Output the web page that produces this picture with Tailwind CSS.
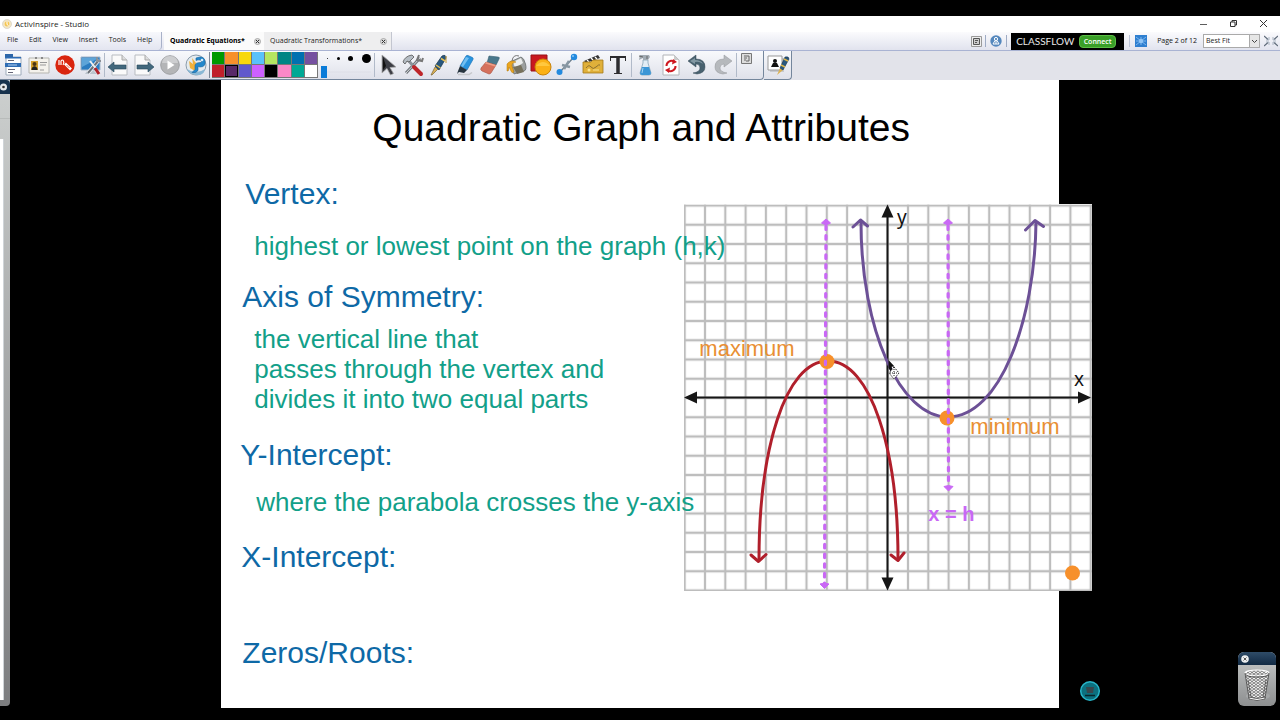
<!DOCTYPE html>
<html lang="en">
<head>
    <meta charset="UTF-8">
    <meta name="viewport" content="width=device-width, initial-scale=1.0">
    <title>ActivInspire - Studio</title>
    <script src="https://cdn.jsdelivr.net/npm/@tailwindcss/browser@4"></script>
</head>
<body class="bg-black h-screen flex flex-col overflow-hidden pt-4 font-['Open_Sans','Noto_Sans',sans-serif] text-[#222]">

    <!-- Title bar -->
    <header class="flex items-center h-4 bg-white pl-[2px] pr-[13px] shrink-0">
        <svg class="size-[10px]" viewBox="0 0 10 10"><circle cx="5" cy="5" r="4.5" fill="#f3e6c4" stroke="#d8d3c8" stroke-width=".8"/><circle cx="5" cy="5" r="2.4" fill="#f6c550"/><path d="M5 2.5v3l1.5 1" stroke="#fff" fill="none"/></svg>
        <h1 class="text-[8px] leading-none ml-[3px]">ActivInspire - Studio</h1>
        <div class="ml-auto flex gap-[23px] pb-[2px] text-[#333]">
            <button type="button" aria-label="Minimize"><svg class="size-[7px]" viewBox="0 0 7 7"><path d="M0 4.500h7" stroke="currentColor" stroke-width=".8"/></svg></button>
            <button type="button" aria-label="Restore"><svg class="size-[7px]" viewBox="0 0 7 7" fill="none" stroke="currentColor"><path d="M.5 2h4.500v4.500H.5zM2 2V.5h4.500V5H5"/></svg></button>
            <button type="button" aria-label="Close"><svg class="size-[7px]" viewBox="0 0 7 7"><path d="M0 0l7 7M7 0L0 7" stroke="currentColor"/></svg></button>
        </div>
    </header>

    <!-- Menu, document tabs, page controls -->
    <div class="flex items-stretch h-[19px] shrink-0 bg-linear-to-b from-[#fbfbfd] to-[#e1e3ee] border-b border-[#a9b3d3]">
        <nav class="flex items-center gap-[11px] w-[162px] pl-[7px] pb-px text-[7px] border-r border-[#a8b1c8] rounded-br bg-linear-to-b from-[#f7f8fc] to-[#e3e5f0]">
            <a href="#">File</a>
            <a href="#">Edit</a>
            <a href="#">View</a>
            <a href="#">Insert</a>
            <a href="#">Tools</a>
            <a href="#">Help</a>
        </nav>
        <div class="flex ml-[2px] text-[7px]">
            <div class="flex items-center justify-between w-[100px] pl-[6px] pr-[3px] bg-[#fbfbfb]">
                <a href="#" class="font-['Noto_Sans',sans-serif] font-bold text-black">Quadratic Equations*</a>
                <button type="button" aria-label="Close Quadratic Equations"><svg class="size-[7px]" viewBox="0 0 7 7"><circle cx="3.500" cy="3.500" r="3" fill="#ddd" stroke="#999" stroke-width=".8"/><path d="M2 2l3 3M5 2L2 5" stroke="#333"/></svg></button>
            </div>
            <div class="flex items-center justify-between w-[128px] pl-[6px] pr-1 bg-[#eeeeef] border-r border-[#c3c6d0]">
                <a href="#">Quadratic Transformations*</a>
                <button type="button" aria-label="Close Quadratic Transformations"><svg class="size-[7px]" viewBox="0 0 7 7"><circle cx="3.500" cy="3.500" r="3" fill="#ddd" stroke="#999" stroke-width=".8"/><path d="M2 2l3 3M5 2L2 5" stroke="#333"/></svg></button>
            </div>
        </div>
        <div class="flex items-center ml-auto pr-[2px] text-[7px]">
            <button type="button" aria-label="Page notes"><svg class="size-[11px]" viewBox="0 0 11 11"><path d="M.5.5h10v10H.5z" fill="#eee" stroke="#999"/><path d="M2.500 2.500h6v6h-6z" fill="#ccc" stroke="#555"/><path d="M4 4.500h3M4 6.500h2" stroke="#555"/></svg></button>
            <span class="w-px h-3 ml-[3px] mr-[4px] bg-[#9eabc4]"></span>
            <button type="button" aria-label="Profile"><svg class="size-3" viewBox="0 0 12 12"><circle cx="6" cy="6" r="5.700" fill="#5487bd"/><circle cx="6" cy="4" r="1.600" fill="none" stroke="#fff"/><path d="M5 5.500L3 9h6L7 5.500M6 6v3" fill="none" stroke="#fff"/></svg></button>
            <span class="w-px h-3 mx-[4px] bg-[#9eabc4]"></span>
            <div class="flex items-center justify-between w-[113px] h-[17px] pl-[5px] pr-2 bg-black">
                <span class="text-[10px] text-[#e8e8e8] font-['Lato',sans-serif]">CLASSFLOW</span>
                <button type="button" class="h-[13px] w-[37px] rounded bg-[#3a9f28] border border-[#5bbd45] leading-none font-semibold text-white">Connect</button>
            </div>
            <span class="w-px h-3 mx-[5px] bg-[#bcc4d8]"></span>
            <button type="button" aria-label="Page browser"><svg class="size-3" viewBox="0 0 12 12"><path d="M0 0h12v12H0z" fill="#2f7fd0"/><path d="M1 2l10 8M11 2L1 10M6 2v8M1 6h10" stroke="#8fc4f5" stroke-width=".8"/><circle cx="6" cy="6" r="2.200" fill="#8fc4f5"/></svg></button>
            <span class="ml-[10px] text-[#111]">Page 2 of 12</span>
            <label class="relative flex ml-[6px]">
                <span class="sr-only">Zoom</span>
                <select class="appearance-none w-[57px] h-[14px] pl-[2px] bg-white border border-[#aaa] leading-[12px] text-[7px]">
                    <option>Best Fit</option>
                </select>
                <svg class="absolute right-0 top-0 w-[11px] h-[14px] pointer-events-none" viewBox="0 0 11 14"><path d="M.5.500h10v13H.5z" fill="#e6e6e6" stroke="#aaa"/><path d="M3 6l2.500 2.500L8 6" fill="none" stroke="#444"/></svg>
            </label>
            <button type="button" class="ml-1" aria-label="Full screen"><svg class="w-[14px] h-3" viewBox="0 0 14 12" fill="none" stroke="#5f6b7a" stroke-width="1.200"><path d="M0 1l4 3.500M14 1l-4 3.500M0 11l4-3.500M14 11l-4-3.500"/><path d="M5 2v3H2M9 2v3h3M5 10V7H2M9 10V7h3" stroke="#9aa6b5" stroke-width=".8"/></svg></button>
        </div>
    </div>

    <!-- Toolbar -->
    <div class="flex h-[29px] shrink-0 bg-[#e2e3ea]">
        <div class="flex items-center bg-linear-to-b from-[#f8f9fc] to-[#dfe1ea] border-b border-r border-[#74869c] rounded-br">
            <div class="grid grid-cols-4 justify-items-center w-[104px]">
                <button type="button" aria-label="Main menu"><svg class="size-6" viewBox="0 0 24 24"><path d="M5 4h15v18H5z" fill="#fff" stroke="#9eabbb"/><path d="M4 1h8v3H4z" fill="#2e66a8"/><path d="M4 4h16v1.500H4zM4 10h16v4H4z" fill="#2e6cb4"/><path d="M7 7.500h6M7 16.500h7M7 19.500h5" stroke="#667" stroke-width="1.200"/><path d="M7 12h9" stroke="#b8d4f2"/></svg></button>
                <button type="button" aria-label="Profiles"><svg class="size-6" viewBox="0 0 24 24"><path d="M2 5h20v15H2z" fill="#f4f2ec" stroke="#b5b5b0"/><path d="M8 4h2v2H8zM14 4h2v2h-2z" fill="#888"/><path d="M4 8h7v9H4z" fill="#d5a02c"/><circle cx="7.500" cy="11" r="2" fill="#4a3515"/><path d="M4.500 17c0-5 6-5 6 0z" fill="#222"/><path d="M13 9.500h7M13 12h6M13 17h4" stroke="#999"/></svg></button>
                <button type="button" aria-label="Annotate over desktop"><svg class="size-6" viewBox="0 0 24 24"><circle cx="12" cy="12" r="9.700" fill="#d9250f"/><path d="M6 7v5M8 12V8q1.500-2 2.500 0T10 12" fill="none" stroke="#fff" stroke-width="1.200"/><path d="M12 10.500l6 6" stroke="#fff" stroke-width="2.600"/><path d="M13.500 12l3 3" stroke="#d9250f" stroke-width=".7"/></svg></button>
                <button type="button" aria-label="Desktop tools"><svg class="size-6" viewBox="0 0 24 24"><path d="M2 4h19v13H2z" fill="#2b7cc0" stroke="#a3b5c8"/><path d="M3 5h17L3 14z" fill="#5da4d8"/><path d="M8 18h7l3 3H6z" fill="#bcc5ce"/><path d="M20 7L9 20" stroke="#f4f6f8" stroke-width="3.500"/><path d="M20 7L9 20" stroke="#6a7077" stroke-width="2"/><path d="M18 4v4h4" fill="none" stroke="#8a9097" stroke-width="1.800"/><path d="M11 8l7 9" stroke="#eee" stroke-width="2"/><path d="M16 15l4 6" stroke="#b12128" stroke-width="3"/></svg></button>
            </div>
            <div class="grid grid-cols-4 justify-items-center w-[105px] border-l border-[#b1bac9]">
                <button type="button" aria-label="Previous page"><svg class="size-6" viewBox="0 0 24 24"><path d="M6 2h10l5 5v15H6z" fill="#fafafa" stroke="#b8bcc1"/><path d="M16 2v5h5" fill="#ddd" stroke="#aaa"/><path d="M2 14l6-5v3h12v4H8v3z" fill="#42687d" stroke="#27485c" stroke-width=".6"/></svg></button>
                <button type="button" aria-label="Next page"><svg class="size-6" viewBox="0 0 24 24"><path d="M3 2h10l5 5v15H3z" fill="#fafafa" stroke="#b8bcc1"/><path d="M13 2v5h5" fill="#ddd" stroke="#aaa"/><path d="M22 14l-6-5v3H5v4h11v3z" fill="#42687d" stroke="#27485c" stroke-width=".6"/></svg></button>
                <button type="button" aria-label="Start vote"><svg class="size-6" viewBox="0 0 24 24"><circle cx="12" cy="12" r="9.300" fill="#b4b5b7" stroke="#9fa1a4"/><path d="M4 10a8 7 0 0116 0z" fill="#cdced0"/><path d="M9.500 7.500l7 4.500-7 4.500z" fill="#fff"/></svg></button>
                <button type="button" aria-label="ExpressPoll"><svg class="size-6" viewBox="0 0 24 24"><circle cx="12" cy="12" r="10" fill="#e4eaee" stroke="#8b9cab"/><path d="M3 16q1 5 9 6t9-6q-4 3-9 3t-9-3z" fill="#8ab8d5"/><path d="M5 8l4 3-1-6 4 5-1 8-5-3z" fill="#f1b13c"/><path d="M12 5q8-3 9 3t-5 6l-2-.5v4q-2 3-6 2l3-3v-4q0-3 6-3 2-2-1-2.500-2-.5-4 .5z" fill="#2387cb" stroke="#1c659d" stroke-width=".6"/><circle cx="18" cy="7" r="1.300" fill="#d8ecfa"/></svg></button>
            </div>
            <div class="grid grid-cols-8 w-[109px] pl-[2px] border-l border-[#7b8798] [&>button]:h-[13px] [&>button]:border-r [&>button]:border-b [&>button]:border-[#777]">
                <button type="button" aria-label="Green" class="bg-[#009900]"></button>
                <button type="button" aria-label="Orange" class="bg-[#f7902b]"></button>
                <button type="button" aria-label="Yellow" class="bg-[#f8d80d]"></button>
                <button type="button" aria-label="Sky blue" class="bg-[#59c1fb]"></button>
                <button type="button" aria-label="Lime" class="bg-[#b5e561]"></button>
                <button type="button" aria-label="Teal" class="bg-[#008585]"></button>
                <button type="button" aria-label="Blue" class="bg-[#0070b0]"></button>
                <button type="button" aria-label="Purple" class="bg-[#7550a0]"></button>
                <button type="button" aria-label="Red" class="bg-[#c0202b]"></button>
                <button type="button" aria-label="Plum" class="bg-[#582968] ring-1 ring-inset ring-black"></button>
                <button type="button" aria-label="Indigo" class="bg-[#6059cc]"></button>
                <button type="button" aria-label="Violet" class="bg-[#cc60ff]"></button>
                <button type="button" aria-label="Black" class="bg-black"></button>
                <button type="button" aria-label="Pink" class="bg-[#fa88c7]"></button>
                <button type="button" aria-label="Turquoise" class="bg-[#00a895]"></button>
                <button type="button" aria-label="White" class="bg-white"></button>
            </div>
            <div class="flex flex-col justify-between w-[56px] h-[26px] px-[3px]">
                <div class="flex items-center justify-between h-[13px] pl-[6px] text-black">
                    <button type="button" aria-label="Pen width 1" class="size-px rounded-full bg-current"></button>
                    <button type="button" aria-label="Pen width 3" class="size-[3px] rounded-full bg-current"></button>
                    <button type="button" aria-label="Pen width 6" class="size-[5px] rounded-full bg-current"></button>
                    <button type="button" aria-label="Pen width 10" class="size-[9px] rounded-full bg-current"></button>
                </div>
                <input type="range" aria-label="Pen width" value="0" class="appearance-none w-full h-3 bg-linear-to-b from-transparent from-45% via-[#ccced6] via-50% to-transparent to-55% [&::-webkit-slider-thumb]:appearance-none [&::-webkit-slider-thumb]:w-[6px] [&::-webkit-slider-thumb]:h-3 [&::-webkit-slider-thumb]:bg-[#0a7bd8]">
            </div>
            <div class="grid grid-cols-10 justify-items-center w-[257px] border-l border-[#b1bac9]">
                <button type="button" aria-label="Select"><svg class="size-6" viewBox="0 0 24 24"><path d="M6 2l14 12-6 .5 3.500 6-3 1.500-3.500-6.500L6 20z" fill="#3c3e45" stroke="#aaa" stroke-width=".8"/><path d="M7 4v13l3-4z" fill="#111"/></svg></button>
                <button type="button" aria-label="Tools"><svg class="size-6" viewBox="0 0 24 24"><path d="M5 20L19 5" stroke="#70757b" stroke-width="3"/><path d="M5 20L19 5" stroke="#d5d9dc"/><path d="M18 2l-2 5 5 1 1-3" fill="none" stroke="#777" stroke-width="2"/><path d="M7 7l7 8" stroke="#8b9299" stroke-width="3"/><path d="M13 14l7 7" stroke="#bd252a" stroke-width="4" stroke-linecap="round"/><path d="M2 9q2-6 9-7l2 2-5 5-2-1-2 3z" fill="#b5bdc4" stroke="#555" stroke-width=".8"/></svg></button>
                <button type="button" aria-label="Pen"><svg class="size-6" viewBox="0 0 24 24"><path d="M4 22l4-8 3 2-6 6z" fill="#d9b157" stroke="#675223" stroke-width=".6"/><path d="M8 13l7-10q4-2 4 2l-7 12z" fill="#28577e" stroke="#17334a" stroke-width=".7"/><path d="M9 12l4.500 3M14 5.500l4 2.500" stroke="#e7c153" stroke-width="1.500"/><path d="M19 3v7" stroke="#c89a32"/></svg></button>
                <button type="button" aria-label="Highlighter"><svg class="size-6" viewBox="0 0 24 24"><path d="M5 21.500h11l3-2" stroke="#c5c7ca" stroke-width="1.500" fill="none"/><path d="M7 13l6-10q1-1 2-.5l4.500 2q1 .5 .5 2L14 17z" fill="#2893de" stroke="#1a6fb0" stroke-width=".6"/><path d="M13 4L8 13l2 1L16 5z" fill="#72bff1"/><path d="M7 13l7 4-3 3-5-1-2 2 1-3z" fill="#27343e"/></svg></button>
                <button type="button" aria-label="Eraser"><svg class="size-6" viewBox="0 0 24 24"><path d="M11 3l9 1q2 0 1 2l-3 6-9-2z" fill="#49788c" stroke="#355e71" stroke-width=".6"/><path d="M8 9l10 3-5 8q-1 1-2 1l-7-3q-2-1-1-3z" fill="#d5715d" stroke="#a9513f" stroke-width=".6"/><path d="M8 9l10 3-1 1.500-10-3z" fill="#ee9d86"/></svg></button>
                <button type="button" aria-label="Fill"><svg class="size-6" viewBox="0 0 24 24"><path d="M8 8q1-7 7-5" fill="none" stroke="#777"/><path d="M6 9l11-5q3 1 4.500 7T20 18l-10 3z" fill="#9c9f9e" stroke="#696e70" stroke-width=".8"/><path d="M9 9l8-4 2 5-8 5z" fill="#eceeee"/><path d="M3 11q4-5 9-2-5 1-4 4l2 6q-2 2-3-1l-2-4q0 5-2 4z" fill="#eba51e" stroke="#b1790d" stroke-width=".5"/><path d="M9 14l4 7 7-2-3-7z" fill="#77715c"/></svg></button>
                <button type="button" aria-label="Shape"><svg class="size-6" viewBox="0 0 24 24"><path d="M2 2h16v16H2z" fill="#c9181f" stroke="#981318"/><circle cx="14" cy="14" r="8" fill="#fbb116" stroke="#c98309"/><path d="M7 13q7-8 14 0z" fill="#ffc83e"/></svg></button>
                <button type="button" aria-label="Connector"><svg class="size-6" viewBox="0 0 24 24"><path d="M4 20L19 4" stroke="#6d7e8c" stroke-width="1.500"/><path d="M7 12l8 2M9 16l5-8" stroke="#8796a2" stroke-width="2.500"/><circle cx="4.500" cy="19" r="3" fill="#238ade"/><circle cx="19" cy="4" r="3.200" fill="#238ade"/><circle cx="18" cy="3" r="1" fill="#8bc9f7"/></svg></button>
                <button type="button" aria-label="Insert media"><svg class="size-6" viewBox="0 0 24 24"><path d="M3 8l14-6 2 3L5 10z" fill="#333"/><path d="M6 7l2 2M10 5l2 2M14 4l2 2" stroke="#fff" stroke-width="1.300"/><path d="M2 9h8l2-2h10v13H2z" fill="#e0b03a" stroke="#a3781a" stroke-width=".8"/><path d="M5 15q3-4 5-1t5 0 4-2" fill="none" stroke="#8c7030"/><circle cx="8" cy="17" r="1.500" fill="#fae38a"/><path d="M12 17h6" stroke="#f8e28e"/></svg></button>
                <button type="button" aria-label="Text"><svg class="size-6" viewBox="0 0 24 24" fill="none" stroke="#2d2d30"><path d="M4 4h16" stroke-width="2"/><path d="M4.500 3v5M19.500 3v5"/><path d="M12 4v17" stroke-width="3.500"/><path d="M8 20.500h8"/></svg></button>
            </div>
            <div class="grid grid-cols-4 justify-items-center w-[105px] border-l border-[#b1bac9]">
                <button type="button" aria-label="Clear"><svg class="size-6" viewBox="0 0 24 24"><path d="M10 7h5v3l3 10q0 2-2 2H9q-2 0-2-2l3-10z" fill="#e1edf5" stroke="#87a5b8" stroke-width=".8"/><path d="M9 14h7l2 6q0 2-2 2H9q-2 0-2-2z" fill="#3a96d6"/><path d="M7 2h9l1 2-2 3h-5V5L6 7z" fill="#a2abb3"/><path d="M6 3l4 1M14 3v3" stroke="#666"/><path d="M10 15l-1 5" stroke="#a2d2f3"/></svg></button>
                <button type="button" aria-label="Reset page"><svg class="size-6" viewBox="0 0 24 24"><path d="M4 2h11l5 5v15H4z" fill="#fff" stroke="#b2b4b8"/><path d="M15 2v5h5z" fill="#ccc"/><path d="M7.500 13a5 5 0 017.500-4.500M16.500 13a5 5 0 01-7.500 4.500" fill="none" stroke="#ce1920" stroke-width="2"/><path d="M14 6l4 3-5 2.500zM10 20l-4-3 5-2.500z" fill="#ce1920"/></svg></button>
                <button type="button" aria-label="Undo"><svg class="size-6" viewBox="0 0 24 24"><path d="M3 8l8-6v4q9 0 9 8 0 6-8 7l-4-1q7-1 7-5 0-4-4-4v3z" fill="#48616f" stroke="#344956" stroke-width=".5"/><path d="M5 8l5-3v2q6 0 8 4-4-3-8-2v2z" fill="#8398a3"/></svg></button>
                <button type="button" aria-label="Redo"><svg class="size-6" viewBox="0 0 24 24"><path d="M21 8l-8-6v4q-9 0-9 8 0 6 8 7l4-1q-7-1-7-5 0-4 4-4v3z" fill="#b6b9bd" stroke="#929599" stroke-width=".5"/></svg></button>
            </div>
            <div class="flex w-[27px] h-6 pl-1 border-l border-[#b1bac9]">
                <button type="button" aria-label="Notes" class="self-start"><svg class="size-[11px]" viewBox="0 0 11 11"><path d="M.5.5h10v10H.5z" fill="#ddd" stroke="#777"/><path d="M3 3h5v5H5M3 5h3M3 7h2" fill="none" stroke="#666"/></svg></button>
            </div>
        </div>
        <div class="flex items-center justify-center w-[28px] bg-linear-to-b from-[#f8f9fc] to-[#dfe1ea] border-b border-r border-[#74869c] rounded-br">
            <button type="button" aria-label="Handwriting recognition"><svg class="size-6" viewBox="0 0 24 24"><path d="M4 5h14v14H4z" fill="#c8cbd0"/><path d="M2 3h14v14H2z" fill="#fff" stroke="#999"/><circle cx="9" cy="8" r="2" fill="#111"/><path d="M5 14l2-4h4l2 4z" fill="#111"/><path d="M11 22l3-7 3 2z" fill="#dcb252"/><path d="M14 15l5-11q4-1 4 2l-6 11z" fill="#28577e" stroke="#17334a" stroke-width=".6"/><path d="M15 12l4 2M18 6l4 2" stroke="#e0b64a" stroke-width="1.500"/></svg></button>
        </div>
    </div>

    <!-- Desktop area with the flipchart page in the middle -->
    <main class="relative flex-1 min-h-0 pb-3">
        <section class="relative h-full aspect-[4/3] mx-auto bg-white font-['Liberation_Sans',Arial,sans-serif] whitespace-nowrap leading-none">

            <svg class="absolute left-[463px] top-[124px] w-[408px] h-[387px]" viewBox="684 204 408 387">
                <defs>
                    <pattern id="cells" x="684.700" y="205.500" width="20.300" height="19.250" patternUnits="userSpaceOnUse">
                        <path d="M0 0H20.300M0 0V19.250M20.300 0V19.250M0 19.250H20.300" stroke="#bdbdbd" stroke-width="2.200"/>
                    </pattern>
                </defs>
                <rect x="684" y="204" width="408" height="387" fill="#fff"/>
                <rect x="684" y="204.500" width="408" height="387" fill="url(#cells)"/>
                <g stroke="#161616" stroke-width="2" fill="#161616">
                    <path d="M688 397.500H1088M887.500 209V587"/>
                    <g stroke="none">
                        <path d="M684 397.500l13-6v12zM1091 397.500l-13-6v12zM887.500 204.500l-6 13h12zM887.500 590.500l-6-13h12z"/>
                    </g>
                </g>
                <g fill="#111" font-size="19" font-family="Noto Sans, sans-serif">
                    <text x="897" y="224">y</text>
                    <text x="1074" y="386">x</text>
                </g>
                <g fill="none" stroke-width="3" stroke-linecap="round" stroke-linejoin="round">
                    <g stroke="#b01f2b">
                        <path d="M759 560C759 450 785 361 828 361S898 450 898 559"/>
                        <path d="M751 555l7.500 6.500 7.500-7M891 555l7 5.500 6-7.500"/>
                    </g>
                    <g stroke="#6c5096">
                        <path d="M861 222C861 330 900 417 948 417C1000 417 1035 320 1036 222"/>
                        <path d="M853 227l7.500-7 7 6M1025.500 230l9.500-9.500 8.500 6"/>
                    </g>
                </g>
                <circle cx="827" cy="361.500" r="7.500" fill="#f7902b"/>
                <circle cx="947" cy="418" r="7.500" fill="#f7902b"/>
                <circle cx="1072.500" cy="573" r="7.500" fill="#f7902b"/>
                <g stroke="#c968f5" stroke-width="3.200" stroke-linecap="round" stroke-dasharray="3.500 6.150" fill="none">
                    <path d="M826 226L824.500 584M948 226L948.500 486"/>
                </g>
                <g fill="#c968f5" stroke="#c968f5" stroke-linejoin="round">
                    <path d="M826 219l4.500 4-4.500 2-4.500-2zM948 219l4.500 4-4.500 2-4.500-2zM824.500 588.500l4.500-4.500-4.500-1-4.500 1zM948.500 491l4.500-4.500-4.500-1-4.500 1z"/>
                </g>
                <!-- pointer -->
                <path d="M888.500 360l6 6.500-3 .3 1 4-2 .2-2-3z" fill="#111"/>
                <path d="M894 367l5 6-5 6-5-6z" fill="#fff" stroke="#222" stroke-dasharray="1.500 1"/>
                <path d="M894 369v8M890 373h8" stroke="#222" stroke-dasharray="1 1"/>
            </svg>

            <h2 class="absolute left-[151px] top-[28px] text-[39px] text-black">Quadratic Graph and Attributes</h2>

            <div class="text-[30px] text-[#0e69a6]">
                <h3 class="absolute left-[24px] top-[99px]">Vertex:</h3>
                <h3 class="absolute left-[21px] top-[202px]">Axis of Symmetry:</h3>
                <h3 class="absolute left-[19px] top-[360px]">Y-Intercept:</h3>
                <h3 class="absolute left-[20px] top-[462px]">X-Intercept:</h3>
                <h3 class="absolute left-[21px] top-[558px]">Zeros/Roots:</h3>
            </div>

            <div class="text-[26px] text-[#12a089]">
                <p class="absolute left-[33px] top-[153px]">highest or lowest point on the graph (h,k)</p>
                <p class="absolute left-[33px] top-[244px] leading-[30px]">the vertical line that<br>passes through the vertex and<br>divides it into two equal parts</p>
                <p class="absolute left-[35px] top-[409px]">where the parabola crosses the y-axis</p>
            </div>

            <div class="text-[22px] text-[#e98f33]">
                <p class="absolute left-[478px] top-[258px]">maximum</p>
                <p class="absolute left-[749px] top-[336px]">minimum</p>
            </div>
            <p class="absolute left-[707px] top-[424px] text-[20px] font-bold text-[#c968f5]">x = h</p>
        </section>

        <!-- Docked browser panel -->
        <aside class="absolute left-0 top-0 bottom-[14px] w-[10px] flex flex-col rounded-br bg-linear-to-b from-[#cdd0cf] to-[#7d7e80]">
            <button type="button" aria-label="Pin panel" class="h-[14px] bg-[#17324c] rounded-tr"><svg class="w-2 h-2" viewBox="0 0 8 8"><circle cx="3.500" cy="4" r="3.500" fill="#e5e8ea"/><circle cx="3.500" cy="4" r="1.300" fill="#333"/></svg></button>
            <div class="h-[25px] border-b border-[#b8bbba]"></div>
            <div class="flex-1 w-1 mt-5 mb-[6px] bg-white border-r border-[#cfd4d8]"></div>
        </aside>

        <button type="button" aria-label="Page trash" class="absolute right-[179px] bottom-[18px]">
            <svg class="size-[22px]" viewBox="0 0 22 22"><circle cx="11" cy="11" r="9.300" fill="#0c707f" stroke="#27b5c8" stroke-width="1.500"/><path d="M7 7h8l-1 6H8z" fill="#37474d"/><path d="M6 15.500h10" stroke="#07252b" stroke-width="1.500"/></svg>
        </button>

        <!-- Trash bin -->
        <div class="absolute right-1 bottom-[14px] w-[38px] h-[54px] flex flex-col rounded-md overflow-hidden bg-linear-to-b from-[#c9cbcb] to-[#8d8f90]">
            <div class="flex items-center h-[13px] pl-[3px] bg-linear-to-b from-[#2f4c68] to-[#122a44]">
                <button type="button" aria-label="Close trash bin"><svg class="size-2" viewBox="0 0 8 8"><circle cx="4" cy="4" r="3.800" fill="#eceff1"/><path d="M2.500 2.500l3 3M5.500 2.500l-3 3" stroke="#555"/></svg></button>
            </div>
            <svg class="w-[30px] h-9 mx-auto mt-[3px]" viewBox="0 0 30 36">
                <defs>
                    <pattern id="mesh" width="4" height="3" patternUnits="userSpaceOnUse"><path d="M0 0h4v3H0z" fill="#f4f4f4"/><path d="M0 0l2 1.500L4 0M0 3l2-1.500L4 3" stroke="#555" stroke-width=".7" fill="none"/></pattern>
                </defs>
                <ellipse cx="16" cy="28" rx="12" ry="4" fill="#a5a7a8"/>
                <path d="M3 5l4 25q8 4 16 0l4-25z" fill="url(#mesh)" stroke="#444" stroke-width=".8"/>
                <path d="M6 12l3 17M24 12l-3 17" stroke="#333" opacity=".6"/>
                <ellipse cx="15" cy="5" rx="12" ry="3" fill="url(#mesh)" stroke="#fff" stroke-width="1.200"/>
                <path d="M3 5q0 4 12 4t12-4" fill="none" stroke="#333" stroke-width=".8"/>
                <path d="M7 29q8 3 16 0v2q-8 3-16 0z" fill="#fff" stroke="#444" stroke-width=".8"/>
            </svg>
        </div>
    </main>
</body>
</html>
